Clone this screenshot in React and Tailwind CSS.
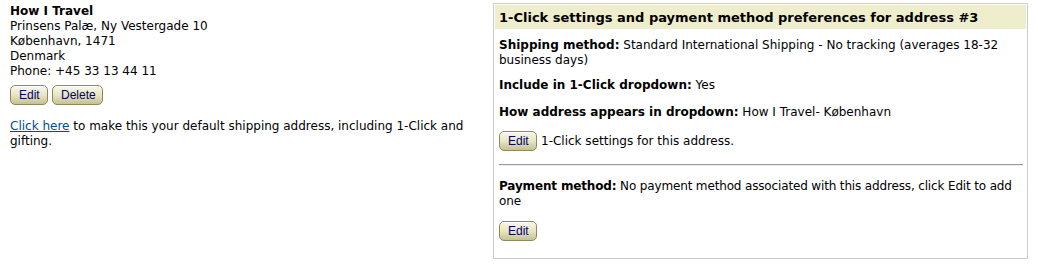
import React from "react";

const font = { fontFamily: '"DejaVu Sans", Verdana, sans-serif' };

function Btn({ children, className = "" }) {
  return (
    <button
      className={
        "h-[20px] rounded-[5px] border border-[#8d8a5c] bg-gradient-to-b from-[#f9f8e6] via-[#e8e6c4] to-[#c5c192] px-[8px] text-[12px] leading-none text-[#000066] shadow-[inset_0_1px_0_#ffffff] " +
        className
      }
      style={{ fontFamily: '"Liberation Sans", Arial, sans-serif' }}
    >
      {children}
    </button>
  );
}

export default function App() {
  return (
    <div className="flex bg-white text-[12px] leading-[15px] text-black" style={font}>
      {/* address */}
      <div className="w-[493px] shrink-0 pl-[10px] pt-[4px] pr-[20px]">
        <div className="font-bold">How I Travel</div>
        <div>Prinsens Palæ, Ny Vestergade 10</div>
        <div>København, 1471</div>
        <div>Denmark</div>
        <div>Phone: +45 33 13 44 11</div>
        <div className="mt-[6px] flex gap-[4px]">
          <Btn className="w-[38px]">Edit</Btn>
          <Btn className="w-[51px]">Delete</Btn>
        </div>
        <p className="mt-[14px]">
          <a href="#" className="text-[#004b91] underline">
            Click here
          </a>{" "}
          to make this your default shipping address, including 1-Click and gifting.
        </p>
      </div>

      {/* 1-Click box */}
      <div className="mt-[3px] h-[256px] w-[535px] shrink-0 border border-[#cccccc] p-[1px]">
        <div className="flex h-[24px] items-center bg-[#eeeecc] px-[4px] text-[13px] font-bold">
          1-Click settings and payment method preferences for address #3
        </div>
        <div className="pl-[4px] pr-0 pt-[9px]">
          <p>
            <b>Shipping method:</b> Standard International Shipping - No tracking (averages 18-32
            business days)
          </p>
          <p className="mt-[10px]">
            <b>Include in 1-Click dropdown:</b> Yes
          </p>
          <p className="mt-[12px]">
            <b>How address appears in dropdown:</b> How I Travel- København
          </p>
          <div className="mt-[11px] flex items-center gap-[4px]">
            <Btn className="w-[38px]">Edit</Btn>
            <span>1-Click settings for this address.</span>
          </div>
          <hr className="mt-[13px] mr-[3px] border-0 border-t border-b border-t-[#9a9a9a] border-b-[#eeeeee]" />
          <p className="mt-[13px] tracking-[-0.15px]">
            <b>Payment method:</b> No payment method associated with this address, click Edit to add
            one
          </p>
          <div className="mt-[12px]">
            <Btn className="w-[38px]">Edit</Btn>
          </div>
        </div>
      </div>
    </div>
  );
}
